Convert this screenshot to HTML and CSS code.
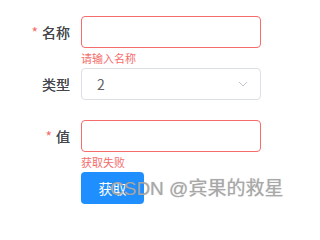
FILE: index.html
```html
<!DOCTYPE html>
<html lang="zh">
<head>
<meta charset="utf-8">
<link rel="stylesheet" href="styles.css">
</head>
<body>
<div class="form">
  <div class="item">
    <label class="label"><span class="star">*</span>名称</label>
    <div class="control">
      <div class="input is-error"></div>
      <div class="error">请输入名称</div>
    </div>
  </div>
  <div class="item">
    <label class="label">类型</label>
    <div class="control">
      <div class="input select">
        <span class="value">2</span>
        <svg class="arrow" width="10" height="6" viewBox="0 0 10 6"><path d="M1 1 L5 5 L9 1" fill="none" stroke="#C0C4CC" stroke-width="1"/></svg>
      </div>
    </div>
  </div>
  <div class="item">
    <label class="label"><span class="star">*</span>值</label>
    <div class="control">
      <div class="input is-error"></div>
      <div class="error">获取失败</div>
    </div>
  </div>
  <div class="item">
    <div class="label"></div>
    <div class="control">
      <button class="btn">获取</button>
    </div>
  </div>
</div>
<div class="watermark">CSDN @宾果的救星</div>
</body>
</html>
```
FILE: styles.css
```css
html, body {
  margin: 0;
  background: #ffffff;
  font-family: "Noto Sans CJK SC", "Noto Sans", sans-serif;
}
.form {
  padding-top: 16px;
}
.item {
  display: flex;
  margin-bottom: 20px;
}
.label {
  width: 81px;
  box-sizing: border-box;
  padding-right: 11px;
  text-align: right;
  font-size: 14px;
  font-weight: 400;
  line-height: 32px;
  color: #45474c;
  text-shadow: 0 0 0.4px #45474c;
}
.star {
  color: #F56C6C;
  margin-right: 4px;
  text-shadow: none;
}
.control {
  position: relative;
  width: 180px;
}
.input {
  height: 32px;
  box-sizing: border-box;
  border: 1px solid #DCDFE6;
  border-radius: 4px;
  background: #fff;
}
.input.is-error {
  border-color: #F56C6C;
}
.select {
  display: flex;
  align-items: center;
  justify-content: space-between;
  padding: 0 12px 0 15px;
}
.value {
  font-size: 14px;
  color: #606266;
}
.arrow {
  display: block;
}
.error {
  position: absolute;
  top: 100%;
  left: 0;
  padding-top: 5px;
  font-size: 11px;
  line-height: 1;
  color: #F56C6C;
}
.btn {
  width: 63px;
  height: 32px;
  border: none;
  border-radius: 4px;
  background: #1f8fff;
  color: #fff;
  font-family: "Noto Sans CJK SC", sans-serif;
  font-size: 14px;
  padding: 0;
}
.watermark {
  position: absolute;
  left: 110px;
  top: 177px;
  font-family: "Liberation Sans", "Noto Sans CJK SC", sans-serif;
  font-size: 19px;
  line-height: 24px;
  color: #a8a8a8;
  text-shadow: 0 0 1px rgba(90, 90, 90, 0.35);
  white-space: nowrap;
}
```
